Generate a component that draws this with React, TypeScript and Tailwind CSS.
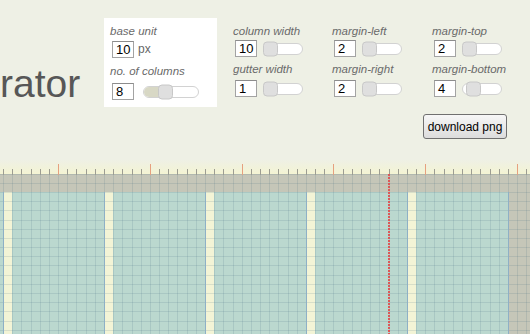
import React from "react";

const U = 9.18;
const X0 = 3;
const px = (v: number) => Math.round(v) + 0.5;

function Field({ value }: { value: string }) {
  return (
    <div className="flex h-[17px] w-[22px] shrink-0 items-center border border-[#a3a3a3] border-t-[#8c8c8c] bg-white pl-[3px] text-[13px] leading-[15px] text-black">
      {value}
    </div>
  );
}

function Slider({
  width,
  thumb,
  fill,
  ml,
}: {
  width: string;
  thumb: string;
  fill?: string;
  ml: string;
}) {
  return (
    <div className={`relative h-[12px] shrink-0 rounded-full border border-[#d2d2d2] bg-white ${width} ${ml}`}>
      {fill ? <div className={`absolute left-0 top-0 h-full rounded-l-full bg-[#d8d8c5] ${fill}`} /> : null}
      <div className={`absolute top-1/2 h-[15px] w-[15px] -translate-y-1/2 rounded-[4px] border border-[#c8c8c8] bg-[#dfdfdf] ${thumb}`} />
    </div>
  );
}

function Label({ children }: { children: React.ReactNode }) {
  return <div className="h-[14px] whitespace-nowrap text-[11.5px] italic leading-[14px] text-[#6a6a6a]">{children}</div>;
}

function Col({
  l1,
  v1,
  l2,
  v2,
  t1,
  t2,
  w,
}: {
  l1: string;
  v1: string;
  l2: string;
  v2: string;
  t1: string;
  t2: string;
  w: string;
}) {
  return (
    <div className={`flex shrink-0 flex-col ${w}`}>
      <Label>{l1}</Label>
      <div className="ml-[2px] mt-[2px] flex items-center">
        <Field value={v1} />
        <Slider width="w-[40px]" ml="ml-[6px]" thumb={t1} />
      </div>
      <div className="mt-[5px]">
        <Label>{l2}</Label>
      </div>
      <div className="ml-[2px] mt-[4px] flex items-center">
        <Field value={v2} />
        <Slider width="w-[40px]" ml="ml-[6px]" thumb={t2} />
      </div>
    </div>
  );
}

function GridCanvas() {
  const ticks = Array.from({ length: 58 }, (_, k) => X0 + k * U);
  const hLines = Array.from({ length: 18 }, (_, j) => 42 + (j - 2) * U);
  const period = 11 * U;
  const cols = Array.from({ length: 6 }, (_, m) => X0 + U + (m - 1) * period);
  const gutters = Array.from({ length: 5 }, (_, m) => X0 + m * period);
  const edges = Array.from({ length: 6 }, (_, m) => X0 + m * period);
  const redX = Math.round(X0 + 42 * U);
  return (
    <svg width="530" height="184" viewBox="0 0 530 184" className="block">
      <defs>
        <linearGradient id="rul" x1="0" y1="0" x2="0" y2="1">
          <stop offset="0.4" stopColor="#eef0e5" />
          <stop offset="1" stopColor="#f4f4d3" />
        </linearGradient>
      </defs>
      <rect x="0" y="0" width="530" height="24" fill="url(#rul)" />
      <rect x="0" y="24" width="530" height="160" fill="#c5c6b8" />
      {cols.map((x, i) => (
        <rect key={"c" + i} x={Math.round(x)} y="42" width={Math.round(x + 10 * U) - Math.round(x)} height="142" fill="#bbd8cf" />
      ))}
      {gutters.map((x, i) => (
        <rect key={"g" + i} x={Math.round(x)} y="42" width={Math.round(x + U) - Math.round(x)} height="142" fill="#f3f4d6" />
      ))}
      {ticks.map((x, i) => (
        <line key={"v" + i} x1={px(x)} x2={px(x)} y1="24" y2="184" stroke="rgba(70,105,125,0.15)" strokeWidth="1" />
      ))}
      {hLines.map((y, i) => (
        <line key={"h" + i} x1="0" x2="530" y1={px(y)} y2={px(y)} stroke="rgba(70,105,125,0.15)" strokeWidth="1" />
      ))}
      {edges.map((x, i) => (
        <line key={"e" + i} x1={px(x)} x2={px(x)} y1="42" y2="184" stroke="#8eb0c6" strokeWidth="1" />
      ))}
      {ticks.map((x, i) =>
        i % 10 === 6 ? (
          <line key={"t" + i} x1={px(x)} x2={px(x)} y1="14" y2="25" stroke="#e6a07f" strokeWidth="1" />
        ) : (
          <line key={"t" + i} x1={px(x)} x2={px(x)} y1="19" y2="25" stroke="#9d9d92" strokeWidth="1" />
        )
      )}
      <line
        x1={redX}
        x2={redX}
        y1="24"
        y2="184"
        stroke="#dc5858"
        strokeWidth="2"
        strokeDasharray="2 1"
      />
    </svg>
  );
}

export default function App() {
  return (
    <div className="h-[334px] w-[530px] overflow-hidden bg-[#eef0e5] font-['Liberation_Sans',Arial,sans-serif]">
      <div className="flex h-[150px]">
        <div className="w-[104px] shrink-0 overflow-hidden pt-[64px]">
          <div className="whitespace-nowrap text-[39px] leading-none text-[#575757]">rator</div>
        </div>
        <div className="mt-[18px] h-[89px] w-[113px] shrink-0 bg-white pl-[6px] pt-[6px]">
          <Label>base unit</Label>
          <div className="ml-[2px] mt-[2px] flex items-center">
            <Field value="10" />
            <span className="ml-[4px] text-[12px] text-[#666]">px</span>
          </div>
          <div className="mt-[6px]">
            <Label>no. of columns</Label>
          </div>
          <div className="ml-[2px] mt-[5px] flex items-center">
            <Field value="8" />
            <Slider width="w-[56px]" ml="ml-[9px]" thumb="left-[14px]" fill="w-[20px]" />
          </div>
        </div>
        <div className="flex flex-1 flex-col pl-[16px]">
          <div className="flex pt-[24px]">
            <Col w="w-[99px]" l1="column width" v1="10" l2="gutter width" v2="1" t1="-left-px" t2="-left-px" />
            <Col w="w-[100px]" l1="margin-left" v1="2" l2="margin-right" v2="2" t1="-left-px" t2="-left-px" />
            <Col w="w-[90px]" l1="margin-top" v1="2" l2="margin-bottom" v2="4" t1="-left-px" t2="left-[3px]" />
          </div>
          <div className="mt-[17px] flex justify-end pr-[23px]">
            <button className="h-[25px] w-[84px] rounded-[3px] border border-[#707070] bg-linear-to-b from-[#f7f7f7] to-[#dcdcdc] text-[12px] text-black">
              download png
            </button>
          </div>
        </div>
      </div>
      <GridCanvas />
    </div>
  );
}
